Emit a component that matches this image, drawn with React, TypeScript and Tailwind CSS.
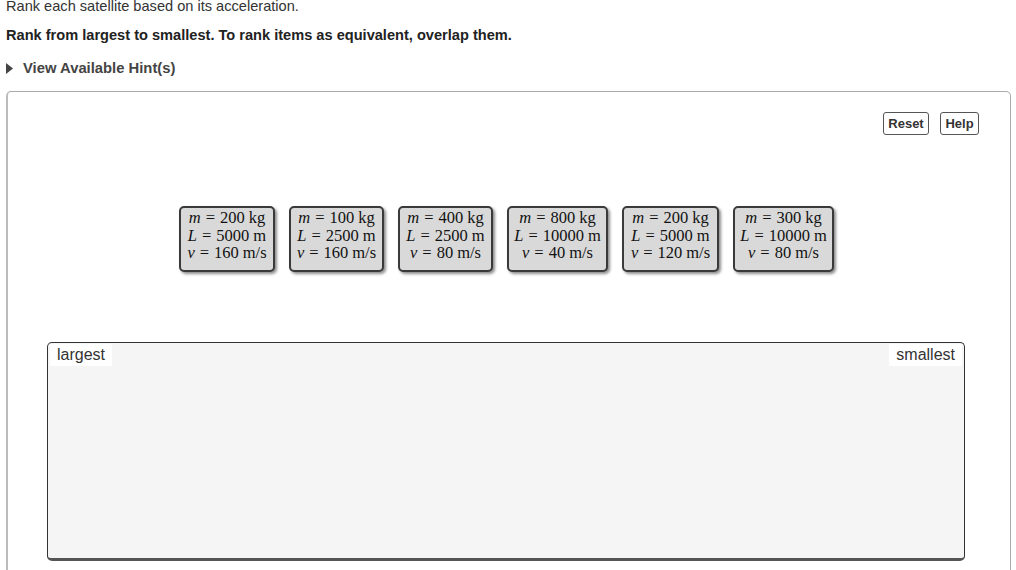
import React from "react";

type Item = { m: string; L: string; v: string; w: number };

const items: Item[] = [
  { m: "200", L: "5000", v: "160", w: 96 },
  { m: "100", L: "2500", v: "160", w: 95 },
  { m: "400", L: "2500", v: "80", w: 95 },
  { m: "800", L: "10000", v: "40", w: 101 },
  { m: "200", L: "5000", v: "120", w: 97 },
  { m: "300", L: "10000", v: "80", w: 101 },
];

function MathLine({ v, val, unit }: { v: string; val: string; unit: string }) {
  return (
    <div className="whitespace-nowrap">
      <span className="italic">{v}</span>
      <span className="mx-[5px]">=</span>
      <span>{val}</span>
      <span className="ml-[4px]">{unit}</span>
    </div>
  );
}

function Card({ item }: { item: Item }) {
  return (
    <div
      className="h-[66px] shrink-0 rounded-[5px] border-2 border-[#3a3a3a] bg-[#d9d9d9] shadow-[2px_2px_3px_rgba(0,0,0,0.45)] flex flex-col items-center justify-center pb-[7px] text-[16.5px] leading-[17.5px] text-[#111]"
      style={{ width: item.w, fontFamily: '"Liberation Serif", "Times New Roman", serif' }}
    >
      <MathLine v="m" val={item.m} unit="kg" />
      <MathLine v="L" val={item.L} unit="m" />
      <MathLine v="v" val={item.v} unit="m/s" />
    </div>
  );
}

export default function App() {
  return (
    <div
      className="w-[1016px] h-[570px] overflow-hidden bg-white text-[#222]"
      style={{ fontFamily: '"Liberation Sans", Arial, sans-serif' }}
    >
      <div className="pl-[6px] text-[14.6px] leading-[12px] text-[#333]">
        Rank each satellite based on its acceleration.
      </div>
      <div className="pl-[6px] mt-[15px] text-[14.6px] leading-[16px] font-bold text-[#222]">
        Rank from largest to smallest. To rank items as equivalent, overlap them.
      </div>
      <div className="pl-[6px] mt-[17px] flex items-center h-[16px] text-[14.8px] font-bold text-[#444]">
        <svg width="7" height="11" viewBox="0 0 7 11" className="mr-[10px]">
          <path d="M0 0 L7 5.5 L0 11 Z" fill="#444" />
        </svg>
        View Available Hint(s)
      </div>

      <div className="ml-[6px] mt-[15px] w-[1005px] h-[500px] rounded-[5px] border border-[#aaa] border-l-2 border-l-[#bbb] pt-[20px]">
        <div className="flex justify-end gap-[11px] pr-[31px]">
          <button className="h-[23px] w-[46px] rounded-[3px] border border-[#555] bg-white text-[13px] font-bold text-[#333]">
            Reset
          </button>
          <button className="h-[23px] w-[39px] rounded-[3px] border border-[#555] bg-white text-[13px] font-bold text-[#333]">
            Help
          </button>
        </div>

        <div className="mt-[71px] flex gap-[14px] pl-[171px]">
          {items.map((it, i) => (
            <Card key={i} item={it} />
          ))}
        </div>

        <div className="ml-[39px] mt-[70px] w-[918px] h-[219px] rounded-[5px] border-[1.5px] border-b-[3px] border-[#333] border-b-[#555] bg-[#f5f5f5] flex justify-between items-start px-[2px] pt-[1px]">
          <div className="bg-white px-[7px] h-[22px] leading-[22px] text-[16px] text-[#333]">largest</div>
          <div className="bg-white px-[7px] h-[22px] leading-[22px] text-[16px] text-[#333]">smallest</div>
        </div>
      </div>
    </div>
  );
}
